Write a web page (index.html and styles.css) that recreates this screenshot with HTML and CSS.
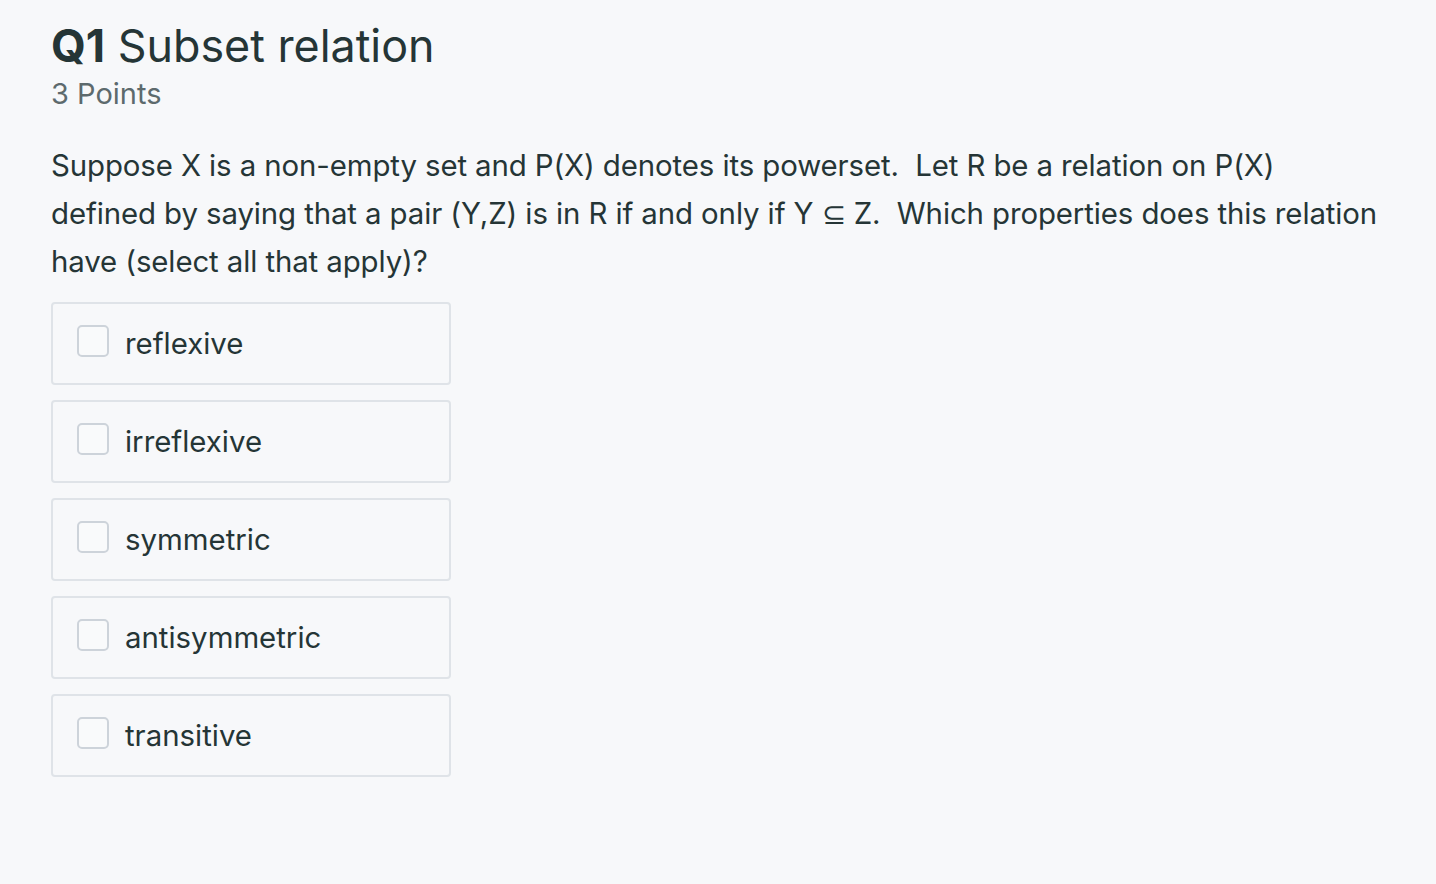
FILE: index.html
```html
<!DOCTYPE html>
<html><head><meta charset="utf-8"><link rel="stylesheet" href="styles.css"></head>
<body>
<main class="question">
  <header class="q-head">
    <h1 class="q-title"><span class="q-num">Q1</span> Subset relation</h1>
    <div class="q-points">3 Points</div>
  </header>
  <p class="q-text">Suppose X is a non-empty set and P(X) denotes its powerset.&nbsp; Let R be a relation on P(X) defined by saying that a pair (Y,Z) is in R if and only if Y ⊆ Z.&nbsp; Which properties does this relation have (select all that apply)?</p>
  <ul class="options">
    <li class="option"><span class="box"></span><span class="label">reflexive</span></li>
    <li class="option"><span class="box"></span><span class="label">irreflexive</span></li>
    <li class="option"><span class="box"></span><span class="label">symmetric</span></li>
    <li class="option"><span class="box"></span><span class="label">antisymmetric</span></li>
    <li class="option"><span class="box"></span><span class="label">transitive</span></li>
  </ul>
</main>
</body></html>
```
FILE: styles.css
```css
html,body{margin:0;background:#f7f8fa}
body{font-family:Inter,"Liberation Sans",sans-serif;color:#253536}
.question{padding:20px 0 0 51px;width:1330px}
.q-title{margin:0;font-size:44.8px;font-weight:400;line-height:52px}
.q-num{font-weight:700}
.q-points{font-size:29px;line-height:40px;color:#5d6a6d;margin-top:2px}
.q-text{margin:28px 0 0;font-size:29.4px;line-height:48px;letter-spacing:-0.1px}
.options{list-style:none;margin:16px 0 0;padding:0;display:flex;flex-direction:column;gap:15px}
.option{width:396px;height:79px;border:2px solid #dfe3e8;border-radius:4px;display:flex;align-items:center;box-sizing:content-box}
.box{width:28px;height:28px;border:2px solid #cdd3da;border-radius:5px;background:#f9fafb;margin:0 16px 0 24px;position:relative;top:-3px}
.label{font-size:29.4px;line-height:40px}
```
